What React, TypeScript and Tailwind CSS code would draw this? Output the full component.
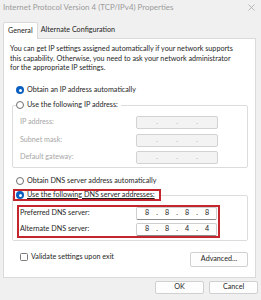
import React from 'react';

const Radio: React.FC<{ on?: boolean }> = ({ on }) =>
  on ? (
    <span className="w-[8px] h-[8px] rounded-full bg-[#0a5fc0] flex items-center justify-center shrink-0">
      <span className="w-[3px] h-[3px] rounded-full bg-white" />
    </span>
  ) : (
    <span className="w-[8px] h-[8px] rounded-full border border-[#6e6e6e] bg-white shrink-0" />
  );

const IpBox: React.FC<{ value?: string[] }> = ({ value }) => (
  <div
    className={
      value
        ? 'w-[81px] h-[13px] flex items-center pl-[3px] bg-white border border-[#cfcfcf] border-b-[#8c8c8c] rounded-[2px] text-[#1c1c1c]'
        : 'w-[82px] h-[13px] flex items-center pl-[3px] bg-[#f3f3f3] border border-[#d2d2d2] rounded-[2px] text-[#aaa]'
    }
  >
    {[0, 1, 2, 3].map((i) => (
      <React.Fragment key={i}>
        <span className="w-[14px] text-center">{value ? value[i] : ''}</span>
        {i < 3 && <span className="w-[6px] text-center">.</span>}
      </React.Fragment>
    ))}
  </div>
);

export default function App() {
  return (
    <div className="w-[261px] h-[300px] bg-[#f0f0f0] overflow-hidden whitespace-nowrap text-[#1f1f1f] text-[7.2px] font-['Lato','Liberation_Sans',sans-serif]">
      {/* Title bar */}
      <div className="h-[15px] flex items-center justify-between pl-[3px] pr-[6px] text-[#9b9b9b]">
        <span className="text-[7.9px]">Internet Protocol Version 4 (TCP/IPv4) Properties</span>
        <svg width="7" height="7" viewBox="0 0 7 7">
          <path d="M0.5 0.5 L6.5 6.5 M6.5 0.5 L0.5 6.5" stroke="#a8a8a8" strokeWidth="0.8" />
        </svg>
      </div>

      {/* Tabs */}
      <div className="mt-[7px] h-[16px] flex items-stretch pl-[3px]">
        <div className="relative z-10 -mb-px px-[4px] flex items-center bg-white border border-b-0 border-[#d9d9d9] rounded-t-[2px]">
          General
        </div>
        <div className="px-[3px] flex items-center">Alternate Configuration</div>
      </div>

      {/* Panel */}
      <div className="ml-[3px] w-[253px] h-[240px] bg-white border border-[#dadada]">
        <p className="pt-[5px] pl-[6px] leading-[9.5px]">
          You can get IP settings assigned automatically if your network supports
          <br />
          this capability. Otherwise, you need to ask your network administrator
          <br />
          for the appropriate IP settings.
        </p>

        <div className="mt-[12.5px] h-[10px] flex items-center gap-[3px] pl-[12px]">
          <Radio on />
          <span>Obtain an IP address automatically</span>
        </div>

        <fieldset className="mt-[5px] ml-[8px] w-[236px] border border-[#dcdcdc] rounded-[2px] px-[3px] pb-[3px]">
          <legend className="h-[10px] flex items-center gap-[3px] pr-[3px]">
            <Radio />
            <span>Use the following IP address:</span>
          </legend>
          <div className="mt-[6px] flex flex-col gap-[4.5px] pl-[4px] text-[#a6a6a6]">
            {['IP address:', 'Subnet mask:', 'Default gateway:'].map((l) => (
              <div key={l} className="h-[13px] flex items-center">
                <span className="w-[116px]">{l}</span>
                <IpBox />
              </div>
            ))}
          </div>
        </fieldset>

        <div className="mt-[8px] h-[10px] flex items-center gap-[3px] pl-[12px]">
          <Radio />
          <span>Obtain DNS server address automatically</span>
        </div>

        <fieldset className="mt-[3px] ml-[8px] w-[236px] border border-[#dcdcdc] rounded-[2px] pb-[2px]">
          <legend className="h-[12px] flex items-center gap-[3px] pl-[1px] pr-[4px] border-2 border-[#c5262e]">
            <Radio on />
            <span className="underline decoration-[0.5px] underline-offset-[1px]">Use the following DNS server addresses:</span>
          </legend>
          <div className="mt-[4px] ml-[4px] w-[203px] border-2 border-[#c5262e] pl-[1px] pr-[1px] flex flex-col gap-[3px]">
            <div className="h-[13px] flex items-center">
              <span className="w-[116px]">Preferred DNS server:</span>
              <IpBox value={['8', '8', '8', '8']} />
            </div>
            <div className="h-[13px] flex items-center">
              <span className="w-[116px]">Alternate DNS server:</span>
              <IpBox value={['8', '8', '4', '4']} />
            </div>
          </div>
        </fieldset>

        <div className="mt-[11px] flex items-start pl-[16px] pr-[7px]">
          <span className="mt-[1px] w-[8px] h-[8px] border border-[#7a7a7a] rounded-[1.5px] bg-white shrink-0" />
          <span className="mt-[1px] ml-[3px] h-[8px] leading-[8px]">Validate settings upon exit</span>
          <button className="ml-auto w-[58px] h-[15px] bg-[#fdfdfd] border border-[#d0d0d0] rounded-[2px] text-[#1f1f1f]">
            Advanced...
          </button>
        </div>
      </div>

      {/* Dialog buttons */}
      <div className="mt-[3px] flex justify-end gap-[5px] pr-[3px]">
        <button className="w-[49px] h-[13px] bg-[#fdfdfd] border border-[#d0d0d0] rounded-[2px]">OK</button>
        <button className="w-[49px] h-[13px] bg-[#fdfdfd] border border-[#d0d0d0] rounded-[2px]">Cancel</button>
      </div>
    </div>
  );
}
